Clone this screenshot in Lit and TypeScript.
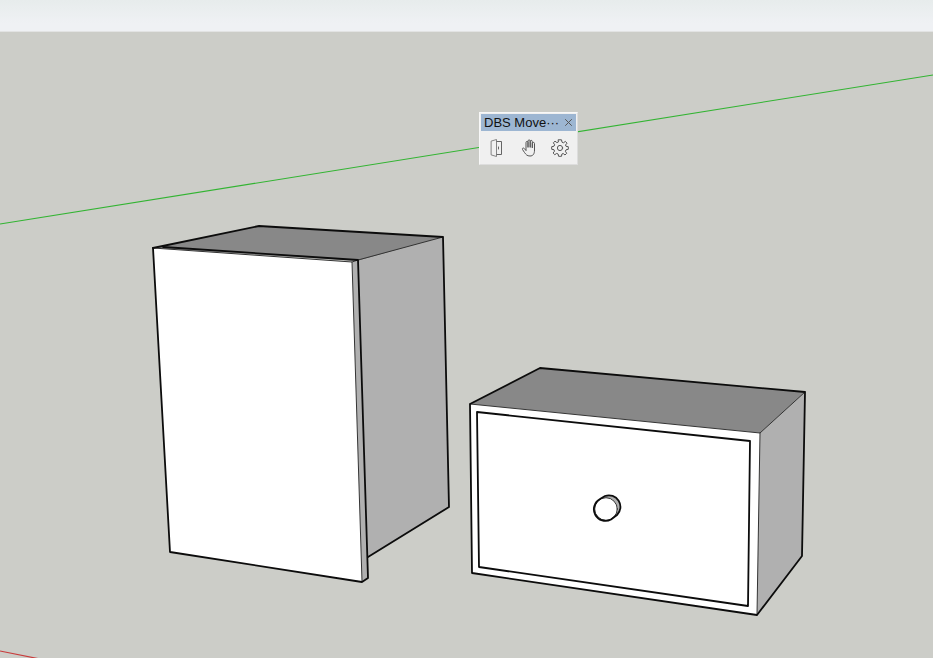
import { LitElement, html, css, svg } from "lit";
import { customElement, state } from "lit/decorators.js";

@customElement("scene-view")
class SceneView extends LitElement {
  static styles = css`
    :host { display: block; }
    svg { display: block; width: 100%; height: 100%; }
    .edge { fill: none; stroke: #0c0c0c; stroke-width: 1.8; stroke-linejoin: round; stroke-linecap: round; }
    .thin { fill: none; stroke: #333; stroke-width: 1; stroke-linecap: round; }
    .front { fill: #fff; }
    .side { fill: #b0b0b0; }
    .top { fill: #888; }
    .green { stroke: #32b432; stroke-width: 1.1; }
    .red { stroke: #c83c3c; stroke-width: 1.2; }
  `;

  private cabinet() {
    return svg`
      <polygon class="top" points="153,248 259,226 443,237 358,261"/>
      <polygon class="side" points="358,261 443,237 449,507 368,557"/>
      <polygon class="side" points="352,262 358,260 368,578 362,582"/>
      <polygon class="front" points="153,248 352,262 362,582 170,552"/>
      <path class="thin" d="M153 248 L352 262 L362 581 M352 262 L358 260 L443 237"/>
      <path class="edge" d="M153 248 L259 226 L443 237 L449 507 L368 557"/>
      <path class="edge" d="M153 248 L170 552 L362 582 L368 578 L358 260 L163 247"/>`;
  }

  private drawer() {
    return svg`
      <polygon class="top" points="470,404 540,368 805,392 760,433"/>
      <polygon class="side" points="760,433 805,392 802,556 757,615"/>
      <polygon class="front" points="470,404 760,433 757,615 472,573"/>
      <path class="thin" d="M470 404 L760 433 L805 392 M760 433 L757 615"/>
      <path class="edge" d="M470 404 L540 368 L805 392 L802 556 L757 615 L472 573 Z"/>
      <path class="edge" d="M477 412 L750 441 L748 606 L479 567 Z"/>
      <path class="side" d="M601 498 L606 496 A11.500 11.500 0 0 1 617 515 L611 520 Z"/>
      <circle class="front" cx="606" cy="509" r="11.300"/>
      <circle class="thin" cx="606" cy="509" r="11.300"/>
      <path class="edge" d="M600 499 L605 496 A11.500 11.500 0 0 1 617 515 L611 519.500 A11.500 11.500 0 0 1 600 499"/>`;
  }

  render() {
    return html`<svg viewBox="0 32 933 626" preserveAspectRatio="xMidYMid slice" role="img" aria-label="Two cabinets">
      <line class="green" x1="0" y1="224" x2="933" y2="75"/>
      <line class="red" x1="0" y1="651" x2="40" y2="659"/>
      ${this.cabinet()}${this.drawer()}
    </svg>`;
  }
}

@customElement("tool-palette")
class ToolPalette extends LitElement {
  @state() private active = "";

  static styles = css`
    :host { display: block; box-sizing: border-box; padding: 1px; background: #f0f0f0; border: 1px solid #f8f8f8; border-right-color: #ddd; border-bottom-color: #ddd; font-family: "Liberation Sans", "Noto Sans CJK KR", sans-serif; }
    header { display: flex; align-items: center; justify-content: space-between; height: 17px; padding: 0 3px; background: #9db6d2; }
    h1 { margin: 0; font-size: 13px; line-height: 17px; font-weight: 400; color: #111; white-space: nowrap; }
    button { display: flex; align-items: center; justify-content: center; padding: 0; border: 0; background: none; color: #555; }
    .close { width: 9px; height: 16px; }
    .tools { display: flex; height: 32px; padding-top: 1px; box-sizing: border-box; }
    .tools button { flex: 1; padding-top: 1px; }
    svg { display: block; fill: none; stroke: currentColor; stroke-linejoin: round; stroke-linecap: round; }
  `;

  private icons: Record<string, unknown> = {
    Door: svg`<path stroke-width=".9" d="M9.500 3.500 H14.500 V16.500 H9.500 M11.500 9 V11"/><path stroke-width=".9" d="M4.500 3 L9.500 1.500 V18.500 L4.500 17 Z" stroke="#777"/>`,
    Move: svg`<path d="M7 12 V4.500 C7 3 9 3 9 4.500 V9 M9 9 V3 C9 1.500 11.200 1.500 11.200 3 V9 M11.200 9 V3.500 C11.200 2 13.300 2 13.300 3.500 V9.500 M13.300 9.500 V5.500 C13.300 4 15.500 4 15.500 5.500 V12 C15.500 16 14 18 11 18 C8 18 7 16.500 5.500 14.500 L3.500 11.500 C2.800 10.300 4.400 9.500 5.300 10.500 L7 12.500"/>`,
    Settings: svg`<circle cx="10" cy="10" r="2.600"/><path d="M8.500 1.800 H11.500 L12 4.200 L13.400 4.800 L15.400 3.400 L17 5.200 L15.500 7 L16 8.300 L18.300 8.700 V11.300 L16 11.800 L15.400 13.300 L16.700 15.300 L15 17 L13.200 15.500 L11.900 16 L11.500 18.300 H8.600 L8.100 16 L6.700 15.400 L4.800 16.700 L3.100 15 L4.500 13.200 L4 11.700 L1.700 11.300 V8.700 L4 8.200 L4.700 6.800 L3.300 4.800 L5 3.200 L6.900 4.600 L8.100 4.100 Z"/>`,
  };

  render() {
    return html`
      <header>
        <h1>DBS Move···</h1>
        <button class="close" aria-label="Close">
          <svg width="7" height="7" viewBox="0 0 7 7"><path d="M.5 .5 L6.500 6.500 M6.500 .5 L.5 6.500"/></svg>
        </button>
      </header>
      <div class="tools">
        ${Object.entries(this.icons).map(([name, icon]) => html`
          <button aria-label=${name} aria-pressed=${this.active === name} @click=${() => (this.active = name)}>
            <svg width="20" height="20" viewBox="0 0 20 20">${icon}</svg>
          </button>`)}
      </div>`;
  }
}

@customElement("app-root")
class AppRoot extends LitElement {
  static styles = css`
    :host { display: flex; flex-direction: column; height: 100vh; overflow: hidden; }
    .bar { flex: none; height: 32px; background: linear-gradient(#e7ecec, #eff1f4 75%); border-bottom: 1px solid #e2e3e3; box-sizing: border-box; }
    .viewport { position: relative; flex: 1; min-height: 0; background: #cccdc8; }
    scene-view { height: 100%; }
    tool-palette { position: absolute; left: 479px; top: 80px; width: 99px; }
  `;

  render() {
    return html`
      <div class="bar"></div>
      <main class="viewport">
        <scene-view></scene-view>
        <tool-palette></tool-palette>
      </main>`;
  }
}
